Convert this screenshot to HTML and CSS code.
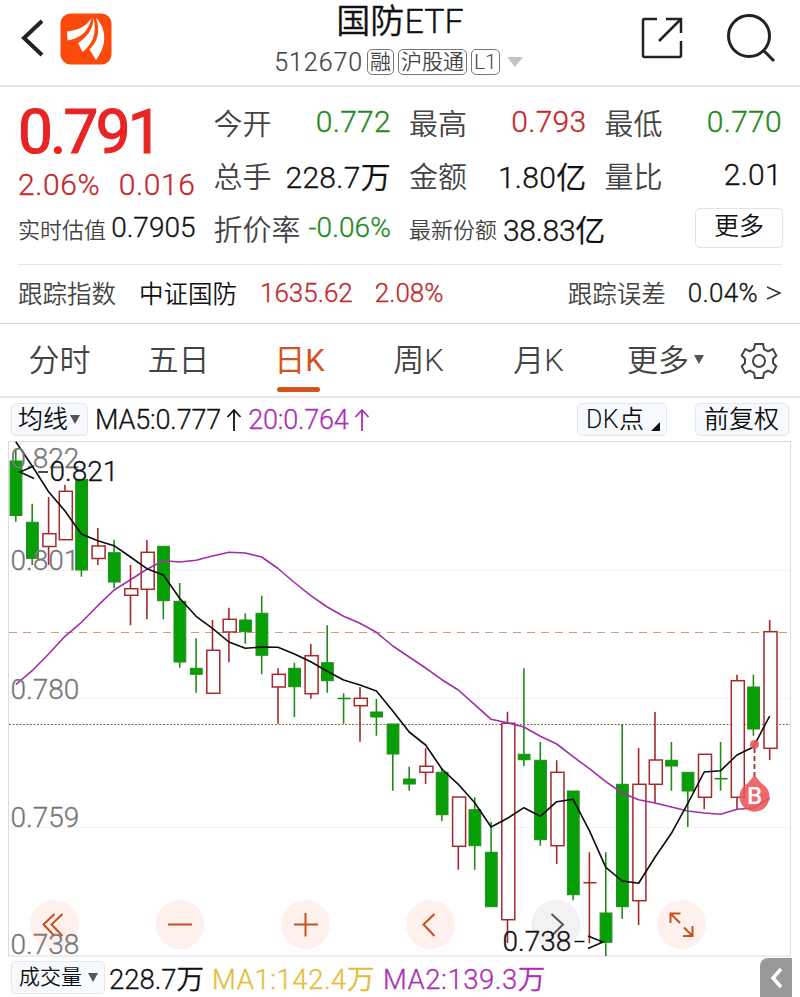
FILE: index.html
```html
<!DOCTYPE html>
<html lang="zh-CN">
<head>
  <meta charset="UTF-8">
  <meta name="viewport" content="width=device-width, initial-scale=1.0">
  <title>国防ETF 512670</title>
  <link rel="stylesheet" href="styles.css">
</head>
<body>
  <header class="header">
    <div class="header-left">
      <svg class="back" width="24" height="40" viewBox="0 0 24 40"><path d="M21 3 3 20l18 17"/></svg>
      <svg class="logo" width="52" height="52" viewBox="0 0 52 52">
        <rect x="0.5" y="0.5" width="51" height="51" rx="10"/>
        <path d="M31.500 5C26 14 18 17 7 18.500l.5 9C20 25.500 29 18 31.500 5zM33.500 5C33 17 27 24 18 30l4.500 9C32 32 37.500 20 33.500 5zM36 5c5 14 1 24-6.500 31.500L36 47C46 34 48 17 36 5z"/>
      </svg>
    </div>
    <div class="header-title">
      <h1>国防ETF</h1>
      <div class="code-row">
        <span class="code">512670</span>
        <span class="tag">融</span>
        <span class="tag">沪股通</span>
        <span class="tag">L1</span>
        <i class="caret caret-light"></i>
      </div>
    </div>
    <div class="header-right">
      <svg class="share" width="42" height="42" viewBox="0 0 42 42"><path d="M16 2H3.500Q2 2 2 3.500v35Q2 40 3.500 40h35q1.500 0 1.500-1.500V24M25 2h15v14M39.500 2.500 18 24"/></svg>
      <svg class="search" width="50" height="50" viewBox="0 0 50 50"><circle cx="23" cy="23" r="20.500"/><path d="m37 37 11 11"/></svg>
    </div>
  </header>

  <section class="quote">
    <div class="quote-grid">
      <div class="price-cell">
        <div class="price">0.791</div>
        <div class="change"><span>2.06%</span><span>0.016</span></div>
      </div>
      <div class="cell"><span class="label">今开</span><span class="num down">0.772</span></div>
      <div class="cell"><span class="label">最高</span><span class="num up">0.793</span></div>
      <div class="cell"><span class="label">最低</span><span class="num down">0.770</span></div>
      <div class="cell"><span class="label">总手</span><span class="num">228.7万</span></div>
      <div class="cell"><span class="label">金额</span><span class="num">1.80亿</span></div>
      <div class="cell"><span class="label">量比</span><span class="num">2.01</span></div>
      <div class="cell"><span class="label small">实时估值</span><span class="num mid">0.7905</span></div>
      <div class="cell"><span class="label">折价率</span><span class="num narrow down">-0.06%</span></div>
      <div class="cell start"><span class="label small">最新份额</span><span class="num share-num">38.83亿</span></div>
      <div class="cell end"><button class="more-btn">更多</button></div>
    </div>
    <div class="index-row">
      <span class="label">跟踪指数</span>
      <span class="index-name">中证国防</span>
      <span class="up index-value">1635.62</span>
      <span class="up">2.08%</span>
      <span class="label error">跟踪误差</span>
      <span class="error-value">0.04%</span>
      <svg width="16" height="16" viewBox="0 0 16 16"><path d="m1 2 13 6-13 6"/></svg>
    </div>
  </section>

  <nav class="tabs">
    <a>分时</a>
    <a>五日</a>
    <a class="active">日K</a>
    <a>周K</a>
    <a>月K</a>
    <a class="tab-more">更多<i class="caret"></i></a>
    <a class="gear">
      <svg width="38" height="38" viewBox="-19 -19 38 38">
        <path d="M-4-17h8l1 5 4 2.300 4.800-2.300 3.500 6.500-3.300 3.500v4l3.300 3.500-3.500 6.500L9 9.700 5 12l-1 5h-8l-1-5-4-2.300-4.800 2.300-3.500-6.500L-14 2v-4l-3.300-3.500 3.500-6.500L-9-9.700-5-12z"/>
        <circle r="6"/>
      </svg>
    </a>
  </nav>

  <div class="ma-bar">
    <span class="chip chip-ma">均线<i class="caret"></i></span>
    <span class="ma5">MA5:0.777<svg width="16" height="24" viewBox="0 0 16 24"><path d="M8 23V2M1.500 9 8 2l6.500 7"/></svg></span>
    <span class="ma20">20:0.764<svg width="16" height="24" viewBox="0 0 16 24"><path d="M8 23V2M1.500 9 8 2l6.500 7"/></svg></span>
    <span class="chip chip-dk">DK点<i class="corner"></i></span>
    <span class="chip chip-fq">前复权</span>
  </div>

  <svg class="chart" width="800" height="516" viewBox="0 441 800 516">
    <g class="grid">
      <path d="M9 570.500H790M9 698.500H790M9 827.500H790"/>
    </g>
    <path class="frame" d="M8.500 441.500h782v514.500h-782z"/>
    <path class="last-line" d="M9 632.500H790"/>
    <path class="base-line" d="M9 724.500H790"/>
    <g class="buttons">
      <circle cx="54.500" cy="924.500" r="24.500"/>
      <circle cx="180" cy="924.500" r="24.500"/>
      <circle cx="305.500" cy="924.500" r="24.500"/>
      <circle cx="430.500" cy="924.500" r="24.500"/>
      <circle class="off" cx="556" cy="924.500" r="24.500"/>
      <circle cx="681.500" cy="924.500" r="24.500"/>
      <path d="m54.500 914-11 10.500 11 11.500M62.500 914l-11 10.500 11 11.500M168 924.500h24M294 924.500h24M305.500 913v23.500M434.500 914l-11 10.500 11 11.500"/>
      <path class="off" d="m551.500 914 11.500 10.500-11.500 11.500"/>
      <path d="m671 914 9 9M670.500 923v-9.500h10M684 927.500l8 8M692.500 926v10h-9.500"/>
    </g>
    <g id="candles"></g>
    <polyline id="ma20" class="line20"/>
    <polyline id="ma5" class="line5"/>
    <g class="axis">
      <text x="10.500" y="468">0.822</text>
      <text x="10.500" y="570">0.801</text>
      <text x="10.500" y="699">0.780</text>
      <text x="10.500" y="827">0.759</text>
      <text x="10.500" y="953.500">0.738</text>
    </g>
    <g class="extreme">
      <path d="m34 466-14 6 14 6.500M38 472h10M574.500 941.500h10M588 936l15 6-15 6.500"/>
      <text x="49.500" y="480.500">0.821</text>
      <text x="502.500" y="950.500">0.738</text>
    </g>
    <g class="buy">
      <path class="stem" d="M754.500 748v30"/>
      <circle cx="754.500" cy="744.500" r="4.500"/>
      <path d="m754.500 775 7 8.500a15 15 0 1 1-14 0z"/>
      <text x="754.500" y="804">B</text>
    </g>
  </svg>

  <footer class="volume-bar">
    <span class="chip chip-vol">成交量<i class="caret"></i></span>
    <span class="vol">228.7万</span>
    <span class="vol vol-ma1">MA1:142.4万</span>
    <span class="vol vol-ma2">MA2:139.3万</span>
    <span class="expand"><svg width="14" height="24" viewBox="0 0 14 24"><path d="M11 3 3 12l8 9"/></svg></span>
  </footer>

  <script src="chart.js"></script>
</body>
</html>
```

FILE: styles.css
```css
* {
  box-sizing: border-box;
}
body {
  margin: 0;
  width: 800px;
  height: 997px;
  overflow: hidden;
  background: #fff;
  color: #111;
  font-family: Roboto, "Noto Sans CJK SC", sans-serif;
  font-weight: 350;
  white-space: nowrap;
}
svg {
  display: block;
  fill: none;
}
.up {
  color: #c3272b;
}
.down {
  color: #23891a;
}
.caret {
  display: inline-block;
  border: 5.5px solid transparent;
  border-top: 9px solid #555;
  border-bottom: 0;
}
.caret-light {
  border-width: 10px 8px 0;
  border-top-color: #c4c4c4;
}

/* header */
.header {
  display: grid;
  grid-template-columns: 200px 1fr 200px;
  height: 87px;
  border-bottom: 2px solid #e6e6e6;
}
.header-left {
  display: flex;
  align-items: flex-start;
  gap: 15px;
  padding: 13px 0 0 21px;
}
.back {
  margin-top: 5px;
  stroke: #222;
  stroke-width: 4;
}
.logo rect {
  fill: #fb4a0b;
}
.logo path {
  fill: #fff;
}
.header-title {
  display: flex;
  flex-direction: column;
  align-items: center;
}
h1 {
  margin: 0;
  font-size: 34px;
  line-height: 43px;
  font-weight: 350;
  letter-spacing: 0.1px;
  -webkit-text-stroke: 0.3px;
}
.code-row {
  display: flex;
  align-items: center;
  gap: 4px;
  height: 38px;
  margin-right: 3px;
  color: #444;
}
.code {
  font-size: 25px;
  letter-spacing: 0.9px;
  -webkit-text-stroke: 0.2px;
}
.tag {
  height: 26px;
  padding: 0 2px;
  border: 1px solid #777;
  border-radius: 5px;
  font-size: 21px;
  line-height: 24px;
}
.tag:last-of-type {
  padding: 0 2px;
}
.code-row .caret {
  margin-left: 3px;
}
.header-right {
  display: flex;
  gap: 43px;
  padding: 13px 0 0 41px;
}
.share {
  margin-top: 4px;
  stroke: #222;
  stroke-width: 2.5;
}
.search {
  stroke: #222;
  stroke-width: 3;
}

/* quote */
.quote {
  height: 237px;
  padding: 8px 18px 0;
  border-bottom: 1px solid #d2d2d2;
}
.quote-grid {
  display: grid;
  grid-template-columns: repeat(4, 1fr);
  grid-template-rows: 53px 53px 53px;
  column-gap: 18px;
  height: 170px;
  border-bottom: 1px solid #e6e6e6;
}
.price-cell {
  grid-row: span 2;
}
.price {
  height: 71px;
  color: #e82424;
  font-size: 62px;
  font-weight: 400;
  line-height: 73px;
  letter-spacing: -2.8px;
  -webkit-text-stroke: 1.2px;
}
.change {
  display: flex;
  justify-content: space-between;
  color: #c3272b;
  font-size: 30px;
  line-height: 37px;
  letter-spacing: 0.6px;
}
.cell {
  display: flex;
  align-items: center;
  justify-content: space-between;
  min-width: 0;
}
.cell.start {
  justify-content: flex-start;
  gap: 6px;
}
.cell.end {
  justify-content: flex-end;
}
.label {
  color: #444;
  font-size: 29px;
}
.label.small {
  font-size: 22px;
}
.num,
.change,
.index-value,
.index-value + .up,
.error-value,
.ma5,
.ma20,
.vol {
  -webkit-text-stroke: 0.3px;
}
.num {
  font-size: 30px;
  letter-spacing: 0.3px;
}
.num.mid {
  font-size: 28px;
  letter-spacing: 0;
}
.num.narrow {
  font-size: 28px;
  letter-spacing: 0.1px;
}
.share-num {
  letter-spacing: -0.3px;
}
.more-btn {
  width: 88px;
  height: 40px;
  margin-right: -1px;
  padding: 0 0 1px;
  border: 1px solid #e2e2e2;
  border-radius: 5px;
  background: #fff;
  color: #111;
  font: inherit;
  font-size: 25px;
  line-height: 34px;
}
.index-row {
  display: flex;
  align-items: center;
  height: 55px;
  font-size: 26px;
}
.index-row .label,
.index-name {
  font-size: 24.5px;
}
.index-name {
  margin-left: 23px;
}
.index-value {
  margin: 0 22px 0 23px;
}
.error {
  margin-left: auto;
}
.error-value {
  margin: 0 8px 0 22px;
  letter-spacing: 0.3px;
}
.index-row svg {
  stroke: #333;
  stroke-width: 1.5;
}

/* period tabs */
.tabs {
  display: grid;
  grid-template-columns: 119px 119px 123px 115px 125px 129px 57px;
  height: 74px;
  border-bottom: 2px solid #e6e6e6;
  color: #444;
  font-size: 31px;
  line-height: 74px;
  text-align: center;
}
.active {
  position: relative;
  color: #d4541c;
  font-weight: 400;
}
.active::after {
  content: "";
  position: absolute;
  left: 39px;
  bottom: 6px;
  width: 43px;
  height: 5px;
  border-radius: 3px;
  background: #d4541c;
}
.tab-more .caret {
  margin-left: 5px;
  vertical-align: 7px;
}
.gear {
  display: flex;
  align-items: center;
  justify-content: center;
}
.gear svg {
  stroke: #444;
  stroke-width: 2;
}

/* indicator bars */
.ma-bar,
.volume-bar {
  display: flex;
  align-items: center;
  font-size: 27px;
}
.ma-bar {
  height: 43px;
  padding: 0 11px;
}
.chip {
  display: flex;
  align-items: center;
  height: 33px;
  border: 1px solid #e2e7ec;
  border-radius: 5px;
  background: #f6fafe;
  font-size: 25px;
  line-height: 30px;
}
.chip-ma {
  width: 77px;
  padding-left: 6px;
}
.chip-ma .caret {
  margin-left: 2px;
}
.ma5,
.ma20 {
  display: flex;
  align-items: center;
}
.ma5 {
  margin-left: 7px;
  letter-spacing: -0.15px;
}
.ma20 {
  margin-left: 6px;
  color: #ad2fb5;
  letter-spacing: -0.2px;
}
.ma-bar svg {
  margin-left: 5px;
  stroke: currentColor;
  stroke-width: 1.8;
}
.chip-dk {
  width: 90px;
  margin-left: auto;
  padding-left: 8px;
  letter-spacing: 0.4px;
}
.corner {
  margin: 14px 0 0 7px;
  border-bottom: 9px solid #111;
  border-left: 9px solid transparent;
}
.chip-fq {
  width: 94px;
  margin-left: 28px;
  padding-left: 8px;
}
.volume-bar {
  height: 40px;
  padding-left: 11px;
}
.chip-vol {
  width: 94px;
  padding-left: 7px;
  font-size: 21px;
}
.chip-vol .caret {
  margin-left: 6px;
}
.vol {
  margin-left: 4px;
  font-size: 27.5px;
}
.vol-ma1 {
  margin-left: 8px;
  color: #e5bd3c;
  letter-spacing: 0.55px;
}
.vol-ma2 {
  margin-left: 8px;
  color: #ad2fb5;
  letter-spacing: 0.55px;
}
.expand {
  display: flex;
  align-items: center;
  width: 32px;
  height: 39px;
  margin: 1px 8px 0 auto;
  padding-left: 10px;
  border-radius: 8px 0 0 0;
  background: #999;
}
.expand svg {
  stroke: #fff;
  stroke-width: 3.5;
}

/* chart */
.grid {
  stroke: #f3f3f3;
}
.frame {
  stroke: #dcdcdc;
}
.last-line {
  stroke: #d39a72;
  stroke-dasharray: 8 6;
}
.base-line {
  stroke: #8a6a45;
  stroke-dasharray: 2 1.5;
}
.green {
  fill: #06a006;
  stroke: #258a1d;
}
.red {
  fill: #fff;
  stroke: #a52a2d;
  stroke-width: 1.5;
}
.wick {
  stroke-width: 1.6;
}
.line5,
.line20 {
  stroke: #0b0b0b;
  stroke-width: 1.6;
  stroke-linejoin: round;
}
.line20 {
  stroke: #a12da8;
}
.axis text,
.extreme text {
  fill: #777;
  stroke: #777;
  stroke-width: 0.3;
  font-size: 28px;
}
.extreme text {
  fill: #111;
  stroke: #111;
}
.extreme path {
  stroke: #111;
  stroke-width: 1.6;
}
.buttons circle {
  fill: #fef0ec;
}
.buttons circle.off {
  fill: #f4f1f3;
}
.buttons path {
  stroke: #c6511d;
  stroke-width: 2;
}
.buttons path.off {
  stroke: #555;
}
.buy circle,
.buy path {
  fill: #ec5458;
  fill-opacity: 0.88;
}
.buy .stem {
  stroke: #a03035;
  stroke-width: 1.8;
  stroke-dasharray: 5 3;
}
.buy text {
  fill: #fff;
  font-size: 24px;
  font-weight: 500;
  text-anchor: middle;
}
```

FILE: chart.js
```js
// [direction, high, body top, body bottom, low]
const candles = [
  ["g", 450, 461, 515.5, 521.7],
  ["g", 503.7, 522.3, 558.3, 565],
  ["r", 497, 533.7, 546.5, 565],
  ["r", 485, 491.3, 539.7, 539.7],
  ["g", 479.3, 479.3, 570, 576.7],
  ["r", 528, 546, 558.5, 565],
  ["g", 539.7, 552.7, 582, 588],
  ["r", 565, 588.7, 595.3, 625.3],
  ["r", 540, 552.3, 589.3, 619.3],
  ["g", 546.3, 546.3, 600.7, 619.3],
  ["g", 583, 601.3, 662, 667.7],
  ["g", 638.3, 668.3, 674.3, 692.7],
  ["r", 620, 650.3, 693.3, 693.3],
  ["r", 607.7, 619.3, 632, 662.3],
  ["g", 613.3, 620, 631.7, 643.7],
  ["g", 595.7, 613.3, 655.3, 674.3],
  ["r", 668.3, 674.3, 687, 723.7],
  ["g", 662.7, 668.3, 686.7, 717],
  ["r", 644, 655.7, 693.7, 698.7],
  ["g", 625.3, 662.7, 680.7, 692.7],
  ["g", 693.3, 698.5, 698.5, 723.7],
  ["r", 687, 698.3, 705.7, 741.7],
  ["g", 699, 712, 717, 735.7],
  ["g", 724, 724, 754, 790.7],
  ["g", 766.7, 779, 784, 790.7],
  ["r", 748.3, 766.3, 772.3, 784],
  ["g", 768, 772.3, 814.7, 821],
  ["r", 797, 797, 846.3, 869.7],
  ["g", 797.3, 809.7, 845.7, 869.7],
  ["g", 821.7, 852.3, 906.7, 906.7],
  ["r", 711.7, 723.3, 919.7, 943],
  ["g", 668.3, 754.3, 759.7, 766.3],
  ["g", 742, 760.3, 839.7, 845.7],
  ["r", 760.3, 772.3, 845.7, 864],
  ["g", 791, 791, 894.7, 900.3],
  ["r", 852.3, 882.7, 882.7, 943.3],
  ["g", 852.3, 913, 942.3, 956],
  ["g", 724, 784.3, 906.7, 919],
  ["r", 748, 784.3, 900.7, 925],
  ["r", 712, 760, 784.3, 803.3],
  ["g", 742, 760.3, 766, 790.7],
  ["g", 772.3, 772.3, 791, 827],
  ["r", 754.3, 754.3, 797.3, 809.3],
  ["g", 742, 778.7, 778.7, 790.7],
  ["r", 674.7, 680.7, 797.3, 809],
  ["g", 674.7, 687, 729, 735.7],
  ["r", 620, 631.7, 748.3, 760]
];

const ma5 = [
  441.7, 466, 491.7, 511, 534, 540.7, 545.7, 557, 568.7, 575, 598.3, 616.3,
  628.3, 642, 648.3, 647, 647.3, 654, 661.7, 671.3, 680, 685, 691, 711, 732,
  745, 769, 784.3, 802.7, 827, 818.3, 807.7, 816.3, 801.7, 799.3, 830.7,
  867.3, 881, 883.3, 857.3, 833.3, 803.3, 772, 770.7, 755, 747, 716
];

const ma20 = [
  684.7, 670.7, 654, 636.3, 622.3, 605.7, 590, 579.7, 569.3, 560.7, 562,
  560.3, 556, 552.3, 553, 557, 568.5, 582.5, 595.7, 607, 616.3, 623.3, 632.3,
  646, 657, 668, 679.7, 690, 704.7, 719.3, 722.7, 727, 736.3, 744, 756.7,
  768.7, 781.7, 793, 799.7, 803, 807, 811, 813, 814.3, 809.3, 808, 798.3
];

const x = i => +(15.8 + i * 16.39).toFixed(1);
const points = values => values.map((v, i) => `${x(i)},${v}`).join(" ");

document.getElementById("candles").innerHTML = candles.map(([dir, high, top, bottom, low], i) => {
  const cls = dir === "g" ? "green" : "red";
  const cx = x(i);
  const wick = `<path class="wick" d="M${cx} ${high}V${top}M${cx} ${bottom}V${low}"/>`;
  const body = top === bottom
    ? `<path class="wick" d="M${cx - 6} ${top}h13"/>`
    : `<rect x="${cx - 5.7}" y="${top}" width="${dir === "g" ? 11.8 : 13}" height="${bottom - top}"/>`;
  return `<g class="${cls}">${wick}${body}</g>`;
}).join("");

document.getElementById("ma5").setAttribute("points", points(ma5));
document.getElementById("ma20").setAttribute("points", points(ma20));
```
